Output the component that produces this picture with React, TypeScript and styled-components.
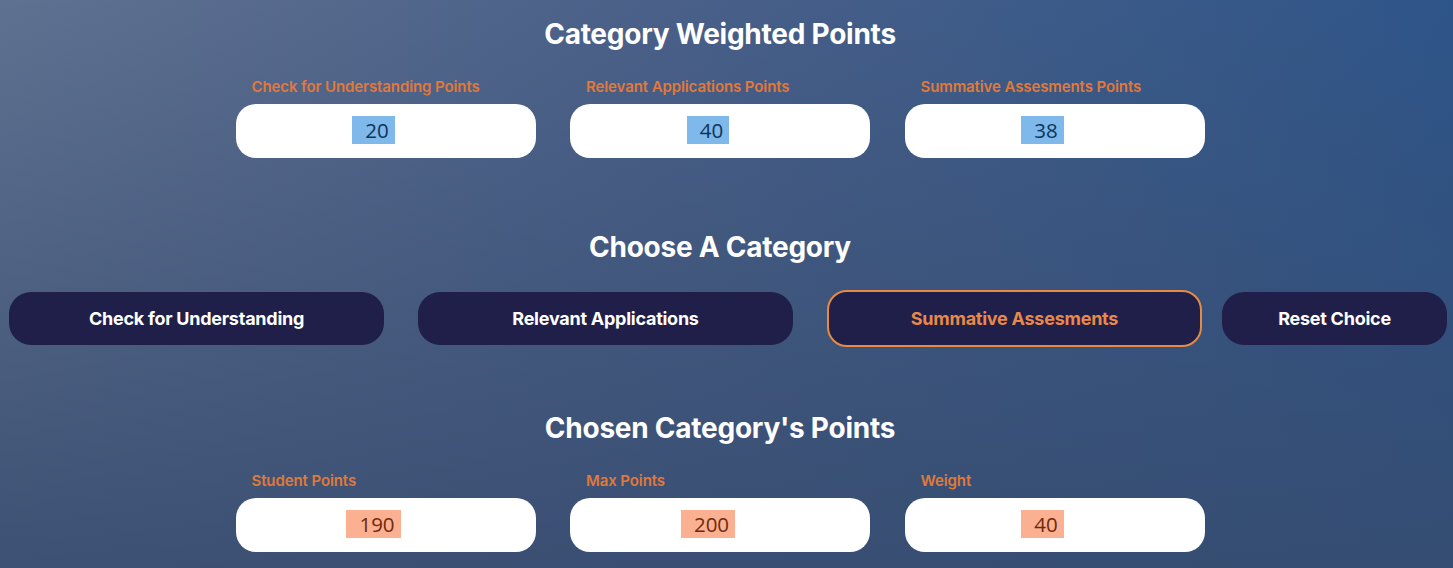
import styled, { createGlobalStyle } from "styled-components";

const GlobalStyle = createGlobalStyle`
  html, body {
    margin: 0;
    padding: 0;
    height: 100%;
  }
  body {
    font-family: Inter, "Liberation Sans", sans-serif;
    background:
      linear-gradient(to bottom, rgba(54, 75, 110, 0) 0%, rgba(54, 75, 110, 0.85) 100%),
      linear-gradient(to right, #5f7191 0%, #4a6088 45%, #2e5589 100%);
    background-attachment: fixed;
  }
`;

const weightedPoints = [
  { label: "Check for Understanding Points", value: "20" },
  { label: "Relevant Applications Points", value: "40" },
  { label: "Summative Assesments Points", value: "38" },
];

const chosenPoints = [
  { label: "Student Points", value: "190" },
  { label: "Max Points", value: "200" },
  { label: "Weight", value: "40" },
];

const categories = [
  "Check for Understanding",
  "Relevant Applications",
  "Summative Assesments",
];

export default function App() {
  const selected = "Summative Assesments";

  return (
    <>
      <GlobalStyle />
      <Page>
        <Section>
          <Heading>Category Weighted Points</Heading>
          <FieldRow>
            {weightedPoints.map(f => (
              <Field key={f.label}>
                <FieldLabel>{f.label}</FieldLabel>
                <FieldBox>
                  <Highlight $tone="blue">{f.value}</Highlight>
                </FieldBox>
              </Field>
            ))}
          </FieldRow>
        </Section>

        <Section $top={71}>
          <Heading>Choose A Category</Heading>
          <ButtonRow>
            {categories.map(c => (
              <CategoryButton key={c} $active={c === selected}>
                {c}
              </CategoryButton>
            ))}
            <ResetButton>Reset Choice</ResetButton>
          </ButtonRow>
        </Section>

        <Section $top={65}>
          <Heading>Chosen Category's Points</Heading>
          <FieldRow>
            {chosenPoints.map(f => (
              <Field key={f.label}>
                <FieldLabel>{f.label}</FieldLabel>
                <FieldBox>
                  <Highlight $tone="orange">{f.value}</Highlight>
                </FieldBox>
              </Field>
            ))}
          </FieldRow>
        </Section>
      </Page>
    </>
  );
}

const Page = styled.div`
  display: flex;
  flex-direction: column;
  padding-top: 16px;
`;

const Section = styled.section<{ $top?: number }>`
  display: flex;
  flex-direction: column;
  align-items: center;
  margin-top: ${p => p.$top ?? 0}px;
`;

const Heading = styled.h2`
  margin: 0;
  padding-right: 13px;
  color: #ffffff;
  font-size: 28px;
  font-weight: 700;
  letter-spacing: -0.25px;
  line-height: 36px;
`;

const FieldRow = styled.div`
  display: flex;
  gap: 34.5px;
  margin-top: 26px;
  padding-right: 13px;
`;

const Field = styled.div`
  display: flex;
  flex-direction: column;
  width: 300px;
`;

const FieldLabel = styled.label`
  color: #e0793a;
  font-size: 15px;
  font-weight: 600;
  letter-spacing: -0.1px;
  line-height: 18px;
  padding-left: 16px;
  margin-bottom: 8px;
`;

const FieldBox = styled.div`
  display: flex;
  align-items: center;
  justify-content: center;
  height: 54px;
  padding: 0 24px 3px 0;
  background: #ffffff;
  border-radius: 20px;
  box-sizing: border-box;
`;

const Highlight = styled.span<{ $tone: "blue" | "orange" }>`
  display: inline-block;
  padding: 2px 6px 2px 13px;
  background: ${p => (p.$tone === "blue" ? "#7fb8ea" : "#fbb092")};
  color: ${p => (p.$tone === "blue" ? "#0d3557" : "#6e2a0c")};
  font-family: "Open Sans", "Liberation Sans", sans-serif;
  font-size: 20.5px;
  font-weight: 500;
  line-height: 24px;
`;

const ButtonRow = styled.div`
  display: flex;
  align-items: center;
  align-self: stretch;
  gap: 34px;
  margin-top: 27px;
  padding: 0 6px 0 9px;
`;

const CategoryButton = styled.button<{ $active?: boolean }>`
  flex: 0 0 375px;
  height: ${p => (p.$active ? "57px" : "53px")};
  margin: ${p => (p.$active ? "-2px 0" : "0")};
  background: #1f1f49;
  border: ${p => (p.$active ? "2.5px solid #e88a44" : "none")};
  border-radius: ${p => (p.$active ? "20px" : "22px")};
  color: ${p => (p.$active ? "#e8894a" : "#ffffff")};
  font-family: Inter, "Liberation Sans", sans-serif;
  font-size: 18px;
  font-weight: 700;
  letter-spacing: -0.25px;
  cursor: pointer;
`;

const ResetButton = styled(CategoryButton)`
  flex: 0 0 225px;
  margin-left: -14px;
`;
